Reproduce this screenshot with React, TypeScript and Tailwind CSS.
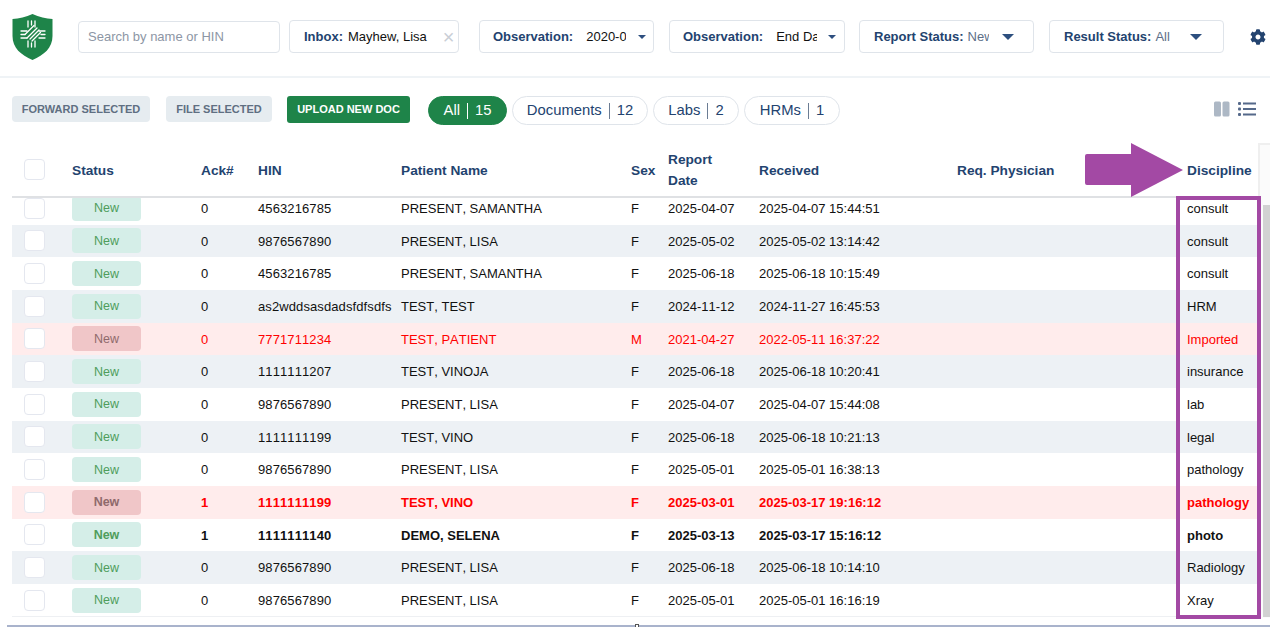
import React from "react";
import { FaCog } from "react-icons/fa";

const cols = "grid grid-cols-[60px_128px_58px_143px_230px_37px_90px_199px_230px_71px] items-center";
type R = { hin: string; name: string; sex: string; rd: string; rc: string; d: string; ack?: string; red?: boolean; bold?: boolean; alt?: boolean };
const rows: R[] = [
  { hin: "4563216785", name: "PRESENT, SAMANTHA", sex: "F", rd: "2025-04-07", rc: "2025-04-07 15:44:51", d: "consult" },
  { hin: "9876567890", name: "PRESENT, LISA", sex: "F", rd: "2025-05-02", rc: "2025-05-02 13:14:42", d: "consult", alt: true },
  { hin: "4563216785", name: "PRESENT, SAMANTHA", sex: "F", rd: "2025-06-18", rc: "2025-06-18 10:15:49", d: "consult" },
  { hin: "as2wddsasdadsfdfsdfs", name: "TEST, TEST", sex: "F", rd: "2024-11-12", rc: "2024-11-27 16:45:53", d: "HRM", alt: true },
  { hin: "7771711234", name: "TEST, PATIENT", sex: "M", rd: "2021-04-27", rc: "2022-05-11 16:37:22", d: "Imported", red: true },
  { hin: "1111111207", name: "TEST, VINOJA", sex: "F", rd: "2025-06-18", rc: "2025-06-18 10:20:41", d: "insurance", alt: true },
  { hin: "9876567890", name: "PRESENT, LISA", sex: "F", rd: "2025-04-07", rc: "2025-04-07 15:44:08", d: "lab" },
  { hin: "1111111199", name: "TEST, VINO", sex: "F", rd: "2025-06-18", rc: "2025-06-18 10:21:13", d: "legal", alt: true },
  { hin: "9876567890", name: "PRESENT, LISA", sex: "F", rd: "2025-05-01", rc: "2025-05-01 16:38:13", d: "pathology" },
  { hin: "1111111199", name: "TEST, VINO", sex: "F", rd: "2025-03-01", rc: "2025-03-17 19:16:12", d: "pathology", ack: "1", red: true, bold: true },
  { hin: "1111111140", name: "DEMO, SELENA", sex: "F", rd: "2025-03-13", rc: "2025-03-17 15:16:12", d: "photo", ack: "1", bold: true },
  { hin: "9876567890", name: "PRESENT, LISA", sex: "F", rd: "2025-06-18", rc: "2025-06-18 10:14:10", d: "Radiology", alt: true },
  { hin: "9876567890", name: "PRESENT, LISA", sex: "F", rd: "2025-05-01", rc: "2025-05-01 16:16:19", d: "Xray" },
];

function Caret() {
  return <span className="h-0 w-0 border-x-[6px] border-t-[6px] border-x-transparent border-t-[#2d4f7f]" />;
}
function SmallCaret() {
  return <span className="h-0 w-0 border-x-[4px] border-t-[4px] border-x-transparent border-t-[#2d4f7f]" />;
}

function Box() {
  return <span className="block h-[21px] w-[21px] rounded border-[1.5px] border-[#e4e7ef] bg-white" />;
}

function Pill({ a, b, w, on }: { a: string; b: string; w: string; on?: boolean }) {
  return (
    <div className={`${w} flex h-[29px] items-center justify-center rounded-full border text-[14.8px] ${on ? "border-[#1e8449] bg-[#1e8449] text-white" : "border-[#dfe4ea] bg-white text-[#23436f]"}`}>
      <span>{a}</span>
      <span className={`mx-[7px] h-[16px] w-px ${on ? "bg-white" : "bg-[#6b7c93]"}`} />
      <span>{b}</span>
    </div>
  );
}

function Row({ r }: { r: R }) {
  const text = r.red ? "text-[#ff0000]" : "text-[#111111]";
  const bg = r.red ? "bg-[#ffecec]" : r.alt ? "bg-[#edf1f5]" : "bg-white";
  return (
    <div className={`${cols} h-[32.67px] text-[13px] [font-kerning:none] ${text} ${bg} ${r.bold ? "font-bold" : ""}`}>
      <div className="pl-[11.5px]"><Box /></div>
      <div>
        <span className={`flex h-[25px] w-[69px] items-center justify-center rounded pt-px text-[12.5px] ${r.red ? "bg-[#f0c6c8] text-[#8f6a6c]" : "bg-[#d5eee8] text-[#4f9d5c]"} ${r.bold && !r.red ? "text-[#3f9148]" : ""}`}>New</span>
      </div>
      <div className="pt-px pl-px">{r.ack ?? "0"}</div>
      <div className="pt-px tracking-[0.1px]">{r.hin}</div>
      <div className="pt-px">{r.name}</div>
      <div className="pt-px">{r.sex}</div>
      <div className="pt-px">{r.rd}</div>
      <div className="pt-px pl-px">{r.rc}</div>
      <div />
      <div className="pt-px">{r.d}</div>
    </div>
  );
}

export default function App() {
  return (
    <div className="relative h-[627px] w-[1270px] overflow-hidden bg-white font-['Liberation_Sans',Arial,sans-serif]">
      <header className="flex h-[78px] items-center border-b-2 border-[#eff3f6] pb-[3px]">
        <svg className="ml-3 shrink-0" width="41" height="46" viewBox="0 0 41 46">
          <path d="M20.500 0C27 3 34 4.500 40.500 5V22C40.500 34 32 41 20.500 46C9 41 0.500 34 0.500 22V5C7 4.500 14 3 20.500 0Z" fill="#1e8449" />
          <g stroke="#fff" strokeWidth="1.300" fill="none" strokeLinecap="round">
            <path d="M16 7V13M19.500 7V11M23 7V13" />
            <path d="M9 17H15M9 20.500H13M9 24H15" />
            <path d="M27 17H33M29 20.500H33M27 24H33" />
            <path d="M16 33V27M19.500 33V29M23 33V27" />
            <path d="M13 20.500L22 11.500M15 24L25 14M18 25L27 16M20 27L28.500 18.500" />
          </g>
        </svg>
        <div className="ml-[25px] flex h-[32px] w-[202px] items-center rounded border border-[#dfe4ea] pl-[9px] text-[13px] text-[#8d96a5]">Search by name or HIN</div>
        <div className="ml-[9px] flex h-[33px] w-[170px] items-center rounded border border-[#dfe4ea] pl-[14px] text-[13px]">
          <span className="font-bold text-[#23436f]">Inbox:</span>
          <span className="ml-[5px] text-[#111]">Mayhew, Lisa</span>
          <span className="ml-[16px] text-[20px] leading-none text-[#c9ced6]">×</span>
        </div>
        <div className="ml-5 flex h-[33px] w-[175px] items-center rounded border border-[#dfe4ea] pl-[13px] text-[13px]">
          <span className="font-bold text-[#23436f]">Observation:</span>
          <span className="ml-[13px] w-[40px] overflow-hidden whitespace-nowrap text-[#111]">2020-01-01</span>
          <span className="ml-[12px] flex"><SmallCaret /></span>
        </div>
        <div className="ml-[15px] flex h-[33px] w-[176px] items-center rounded border border-[#dfe4ea] pl-[13px] text-[13px]">
          <span className="font-bold text-[#23436f]">Observation:</span>
          <span className="ml-[13px] w-[41px] overflow-hidden whitespace-nowrap text-[#111]">End Date</span>
          <span className="ml-[11px] flex"><SmallCaret /></span>
        </div>
        <div className="ml-[14px] flex h-[33px] w-[175px] items-center rounded border border-[#dfe4ea] pl-[14px] text-[13px]">
          <span className="font-bold text-[#23436f]">Report Status:</span>
          <span className="ml-[4px] w-[21px] overflow-hidden whitespace-nowrap text-[#5d6f88]">New</span>
          <span className="ml-[13px] flex"><Caret /></span>
        </div>
        <div className="ml-[15px] flex h-[33px] w-[175px] items-center rounded border border-[#dfe4ea] pl-[14px] text-[13px]">
          <span className="font-bold text-[#23436f]">Result Status:</span>
          <span className="ml-[4px] w-[25px] overflow-hidden whitespace-nowrap text-[#5d6f88]">All</span>
          <span className="ml-[10px] flex"><Caret /></span>
        </div>
        <FaCog className="ml-[26px] text-[16px] text-[#23436f]" />
      </header>

      <div className="flex h-[65px] items-start pl-3 pt-[18px]">
        <button className="h-[26px] w-[138px] rounded bg-[#e6ecf0] text-[11px] font-bold text-[#5f6f82]">FORWARD SELECTED</button>
        <button className="ml-4 h-[26px] w-[106px] rounded bg-[#e6ecf0] text-[11px] font-bold text-[#5f6f82]">FILE SELECTED</button>
        <button className="ml-[15px] h-[27px] w-[123px] rounded-[3px] bg-[#1e8449] text-[11px] font-bold text-white">UPLOAD NEW DOC</button>
        <div className="ml-[18px] flex gap-[5px]">
          <Pill a="All" b="15" w="w-[79px]" on />
          <Pill a="Documents" b="12" w="w-[136px]" />
          <Pill a="Labs" b="2" w="w-[86px]" />
          <Pill a="HRMs" b="1" w="w-[96px]" />
        </div>
        <svg className="ml-[374px] mt-[5px]" width="42" height="16" viewBox="0 0 42 16">
          <rect x="0" y="0.500" width="7" height="15" rx="1.500" fill="#adb8c5" />
          <rect x="8.500" y="0.500" width="7" height="15" rx="1.500" fill="#adb8c5" />
          <g fill="#55698a">
            <rect x="24" y="1" width="3" height="3" rx="1" />
            <rect x="24" y="6.500" width="3" height="3" rx="1" />
            <rect x="24" y="12" width="3" height="3" rx="1" />
            <rect x="29" y="1.500" width="13" height="2" />
            <rect x="29" y="7" width="13" height="2" />
            <rect x="29" y="12.500" width="13" height="2" />
          </g>
        </svg>
      </div>

      <div className="ml-3 flex w-[1258px]">
        <div className="w-[1246px]">
          <div className={`${cols} h-[55px] border-b-2 border-[#dfe1e4] pt-[3px] text-[13.7px] font-bold text-[#23436f]`}>
            <div className="pl-[11.5px] pb-[3px]"><Box /></div>
            <div>Status</div>
            <div className="pl-px">Ack#</div>
            <div>HIN</div>
            <div>Patient Name</div>
            <div>Sex</div>
            <div className="-mt-[3px] w-[60px] leading-[21px]">Report Date</div>
            <div className="pl-px">Received</div>
            <div>Req. Physician</div>
            <div>Discipline</div>
          </div>
          <div className="h-[419px] overflow-hidden border-b border-[#eef0f3]">
            <div className="-mt-[6px]">
              {rows.map((r, i) => <Row key={i} r={r} />)}
            </div>
          </div>
        </div>
        <div className="flex h-[475px] w-3 flex-col border-l-2 border-t-2 border-[#efefef] bg-[#fbfbfb]">
          <div className="h-[60px]" />
          <div className="ml-[3px] h-[412px] w-[7px] bg-[#d2d2d2]" />
        </div>
      </div>

      <div className="absolute bottom-0 left-[7px] right-0 h-[2px] bg-[#a9b3cc]" />
      <div className="absolute bottom-0 left-[635px] h-[3px] w-[4px] border-x border-t border-[#555] bg-white" />

      <svg className="absolute left-[1085px] top-[142px]" width="99" height="56" viewBox="0 0 99 56">
        <path d="M2 12H46V1L98 28L46 55V43H2Q0 43 0 41V14Q0 12 2 12Z" fill="#a349a4" />
      </svg>
      <div className="absolute left-[1176px] top-[196px] h-[423px] w-[85px] border-[4px] border-[#a349a4]" />
    </div>
  );
}
